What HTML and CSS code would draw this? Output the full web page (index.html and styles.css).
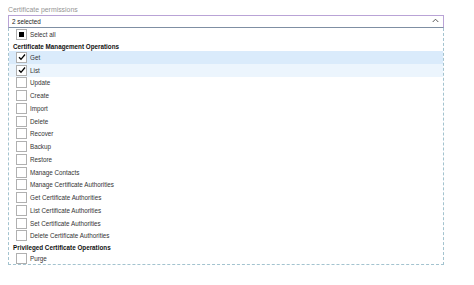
FILE: index.html
```html
<!DOCTYPE html>
<html>
<head>
<meta charset="utf-8">
<link rel="stylesheet" href="styles.css">
</head>
<body>
<div class="field">
  <div class="label">Certificate permissions</div>
  <div class="select">
    <span class="value">2 selected</span>
    <svg class="chev" width="7" height="5" viewBox="0 0 7 5"><path d="M0.7 4 L3.5 1.2 L6.3 4" fill="none" stroke="#444" stroke-width="0.9"/></svg>
  </div>
  <div class="list">
    <div class="row"><span class="box"><span class="ind"></span></span><span>Select all</span></div>
    <div class="head">Certificate Management Operations</div>
    <div class="row sel"><span class="box"><svg width="8" height="8" viewBox="0 0 8 8"><path d="M1 4.2 L3 6.3 L7 1.5" fill="none" stroke="#000" stroke-width="1.3"/></svg></span><span>Get</span></div>
    <div class="row sel2"><span class="box"><svg width="8" height="8" viewBox="0 0 8 8"><path d="M1 4.2 L3 6.3 L7 1.5" fill="none" stroke="#000" stroke-width="1.3"/></svg></span><span>List</span></div>
    <div class="row"><span class="box"></span><span>Update</span></div>
    <div class="row"><span class="box"></span><span>Create</span></div>
    <div class="row"><span class="box"></span><span>Import</span></div>
    <div class="row"><span class="box"></span><span>Delete</span></div>
    <div class="row"><span class="box"></span><span>Recover</span></div>
    <div class="row"><span class="box"></span><span>Backup</span></div>
    <div class="row"><span class="box"></span><span>Restore</span></div>
    <div class="row"><span class="box"></span><span>Manage Contacts</span></div>
    <div class="row"><span class="box"></span><span>Manage Certificate Authorities</span></div>
    <div class="row"><span class="box"></span><span>Get Certificate Authorities</span></div>
    <div class="row"><span class="box"></span><span>List Certificate Authorities</span></div>
    <div class="row"><span class="box"></span><span>Set Certificate Authorities</span></div>
    <div class="row"><span class="box"></span><span>Delete Certificate Authorities</span></div>
    <div class="head">Privileged Certificate Operations</div>
    <div class="row"><span class="box"></span><span>Purge</span></div>
  </div>
</div>
</body>
</html>
```
FILE: styles.css
```css
html, body {
  margin: 0;
  padding: 0;
  background: #fff;
}
body {
  font-family: "Liberation Sans", Arial, sans-serif;
  font-size: 6.3px;
  color: #333;
}
.field {
  width: 436px;
  padding: 4px 0 0 8px;
}
.label {
  color: #959595;
  font-size: 6.9px;
  height: 11px;
  line-height: 11px;
}
.select {
  height: 11px;
  border: 1px solid #b9a3d6;
  border-bottom-color: #7f8fa3;
  display: flex;
  align-items: center;
  justify-content: space-between;
  padding: 0 4px 0 3px;
}
.value {
  color: #222;
}
.chev {
  margin-top: -2px;
}
.list {
  border: 1px dashed #a3c3cf;
  border-top: none;
  height: 237px;
  box-sizing: border-box;
}
.row {
  height: 12.75px;
  display: flex;
  align-items: center;
  gap: 3px;
  padding-left: 7px;
}
.row.sel {
  background: #daebfb;
}
.row.sel2 {
  background: #ecf5fd;
}
.head {
  height: 10.25px;
  line-height: 11px;
  font-weight: 700;
  padding-left: 4px;
  color: #111;
}
.box {
  width: 9px;
  height: 9px;
  border: 1px solid #b0b0b0;
  background: #fff;
  display: flex;
  align-items: center;
  justify-content: center;
  flex: none;
}
.ind {
  width: 5px;
  height: 5px;
  background: #000;
}
```
